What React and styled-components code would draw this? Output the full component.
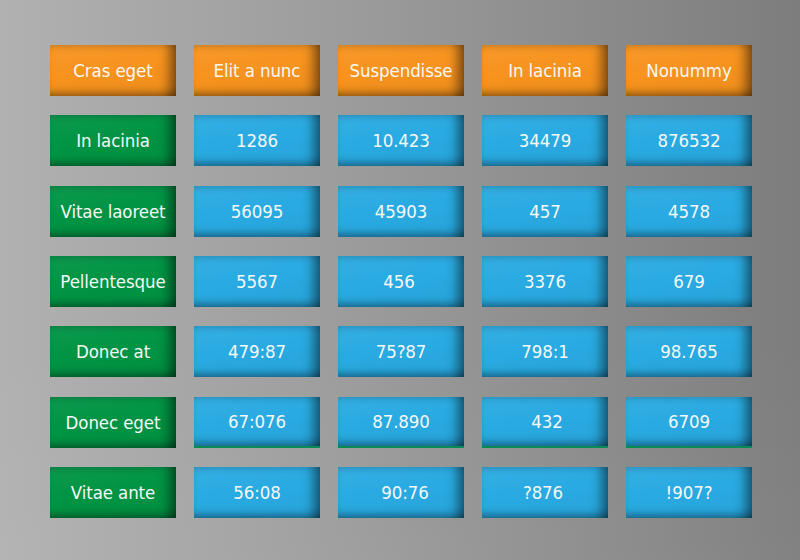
import React from "react";
import styled, { createGlobalStyle, css } from "styled-components";

const GlobalStyle = createGlobalStyle`
  html, body {
    margin: 0;
    padding: 0;
  }
  body {
    width: 800px;
    height: 560px;
    overflow: hidden;
  }
`;

const Page = styled.div`
  width: 800px;
  height: 560px;
  box-sizing: border-box;
  padding: 45px 0 0 50px;
  background:
    linear-gradient(to bottom, rgba(255, 255, 255, 0) 60%, rgba(255, 255, 255, 0.04) 100%),
    linear-gradient(to right, #b1b1b1 0%, #9b9b9b 45%, #7d7d7d 100%);
  font-family: "DejaVu Sans Condensed", "DejaVu Sans", sans-serif;
  font-stretch: condensed;
`;

const Grid = styled.div`
  display: grid;
  grid-template-columns: repeat(5, 126px);
  grid-auto-rows: 51px;
  column-gap: 18px;
  row-gap: 19.33px;
`;

const colors = {
  head: "#f7931e",
  side: "#009444",
  cell: "#29aae2",
};

const Tile = styled.div`
  position: relative;
  display: flex;
  align-items: center;
  justify-content: center;
  background-color: ${(p) => colors[p.kind]};
  background-image: linear-gradient(
    172deg,
    rgba(255, 255, 255, 0.06) 0%,
    rgba(255, 255, 255, 0) 45%,
    rgba(0, 0, 0, 0.04) 100%
  );
  box-shadow:
    inset -14px 0 12px -8px rgba(0, 0, 0, 0.5),
    inset 0 -9px 9px -6px rgba(0, 0, 0, 0.4),
    inset 0 7px 8px -6px rgba(0, 0, 0, 0.18);
  color: #f6f8f6;
  font-size: 18.5px;
  letter-spacing: -0.1px;
  ${(p) =>
    p.line &&
    css`
      border-bottom: 2px solid #0a8a55;
    `}
`;

const Label = styled.span`
  transform: translateX(${(p) => p.shift || 0}px);
`;

const header = ["Cras eget", "Elit a nunc", "Suspendisse", "In lacinia", "Nonummy"];

const rows = [
  { name: "In lacinia", values: ["1286", "10.423", "34479", "876532"] },
  { name: "Vitae laoreet", values: ["56095", "45903", "457", "4578"] },
  { name: "Pellentesque", values: ["5567", "456", "3376", "679"] },
  { name: "Donec at", values: ["479:87", "75?87", "798:1", "98.765"] },
  { name: "Donec eget", values: ["67:076", "87.890", "432", "6709"], line: true },
  { name: "Vitae ante", values: ["56:08", "90:76", "?876", "!907?"] },
];

const shifts = {
  "432": 2,
  "90:76": 4,
  "?876": -2,
  "456": -2,
};

const App = () => {
  return (
    <Page>
      <GlobalStyle />
      <Grid>
        {header.map((h, i) => (
          <Tile key={`h-${i}`} kind="head">
            <Label>{h}</Label>
          </Tile>
        ))}
        {rows.map((r, i) => (
          <React.Fragment key={`r-${i}`}>
            <Tile kind="side">
              <Label>{r.name}</Label>
            </Tile>
            {r.values.map((v, j) => (
              <Tile key={`c-${i}-${j}`} kind="cell" line={r.line}>
                <Label shift={shifts[v]}>{v}</Label>
              </Tile>
            ))}
          </React.Fragment>
        ))}
      </Grid>
    </Page>
  );
};

export default App;
